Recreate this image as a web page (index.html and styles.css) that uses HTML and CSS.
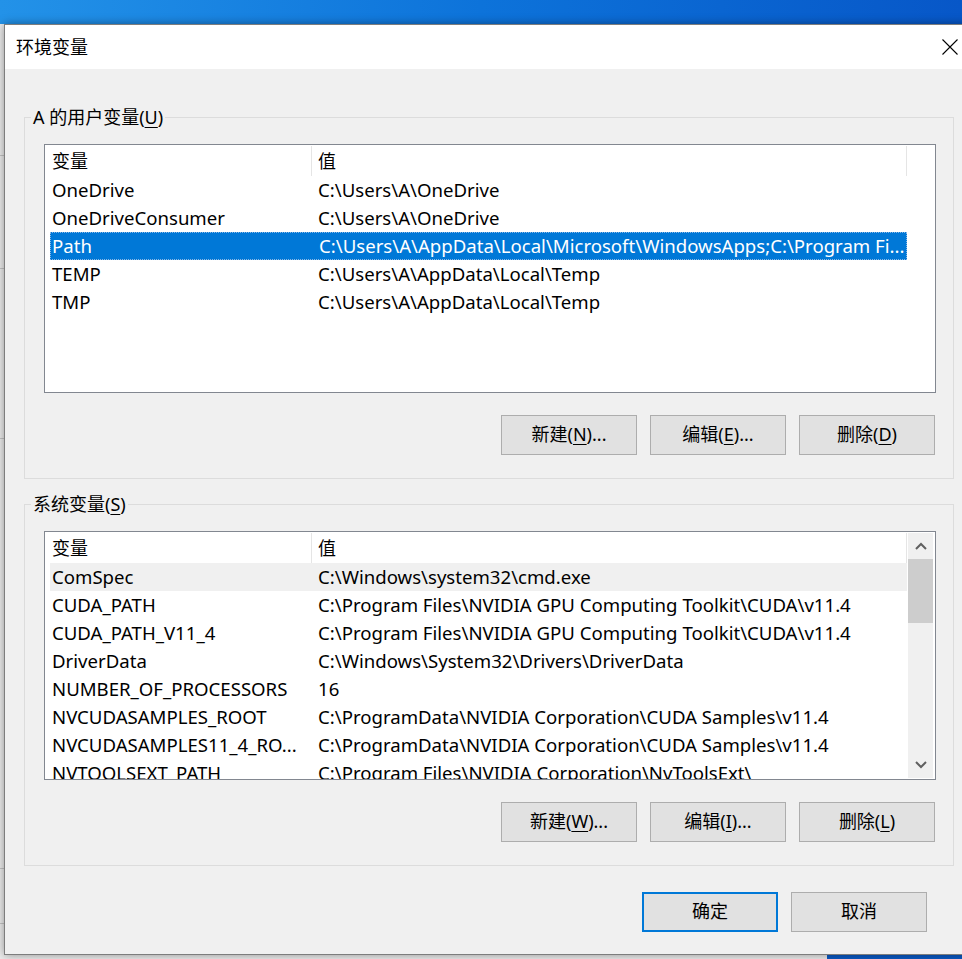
FILE: index.html
```html
<!DOCTYPE html>
<html lang="zh-CN">
<head>
<meta charset="utf-8">
<title>环境变量</title>
<link rel="stylesheet" href="styles.css">
</head>
<body>
<div class="dialog">
  <div class="titlebar">
    <span class="title">环境变量</span>
    <span class="close">
      <svg width="16" height="16" viewBox="0 0 16 16"><path d="M0.5 0.5L15.5 15.5M15.5 0.5L0.5 15.5" stroke="#000" stroke-width="1.1" fill="none"/></svg>
    </span>
  </div>
  <div class="content">
    <fieldset class="group">
      <legend>A 的用户变量(<u>U</u>)</legend>
      <div class="group-body">
        <div class="list">
          <div class="list-main">
            <div class="list-head"><span class="head-name">变量</span><span class="head-value">值</span></div>
            <div class="row"><span class="cell-name">OneDrive</span><span class="cell-value">C:\Users\A\OneDrive</span></div>
            <div class="row"><span class="cell-name">OneDriveConsumer</span><span class="cell-value">C:\Users\A\OneDrive</span></div>
            <div class="row selected"><span class="cell-name">Path</span><span class="cell-value">C:\Users\A\AppData\Local\Microsoft\WindowsApps;C:\Program Fi...</span></div>
            <div class="row"><span class="cell-name">TEMP</span><span class="cell-value">C:\Users\A\AppData\Local\Temp</span></div>
            <div class="row"><span class="cell-name">TMP</span><span class="cell-value">C:\Users\A\AppData\Local\Temp</span></div>
          </div>
        </div>
        <div class="buttons">
          <span class="btn">新建(<u>N</u>)...</span>
          <span class="btn">编辑(<u>E</u>)...</span>
          <span class="btn">删除(<u>D</u>)</span>
        </div>
      </div>
    </fieldset>

    <fieldset class="group">
      <legend>系统变量(<u>S</u>)</legend>
      <div class="group-body">
        <div class="list">
          <div class="list-main">
            <div class="list-head"><span class="head-name">变量</span><span class="head-value">值</span></div>
            <div class="row hot"><span class="cell-name">ComSpec</span><span class="cell-value">C:\Windows\system32\cmd.exe</span></div>
            <div class="row"><span class="cell-name">CUDA_PATH</span><span class="cell-value">C:\Program Files\NVIDIA GPU Computing Toolkit\CUDA\v11.4</span></div>
            <div class="row"><span class="cell-name">CUDA_PATH_V11_4</span><span class="cell-value">C:\Program Files\NVIDIA GPU Computing Toolkit\CUDA\v11.4</span></div>
            <div class="row"><span class="cell-name">DriverData</span><span class="cell-value">C:\Windows\System32\Drivers\DriverData</span></div>
            <div class="row"><span class="cell-name">NUMBER_OF_PROCESSORS</span><span class="cell-value">16</span></div>
            <div class="row"><span class="cell-name">NVCUDASAMPLES_ROOT</span><span class="cell-value">C:\ProgramData\NVIDIA Corporation\CUDA Samples\v11.4</span></div>
            <div class="row"><span class="cell-name">NVCUDASAMPLES11_4_RO...</span><span class="cell-value">C:\ProgramData\NVIDIA Corporation\CUDA Samples\v11.4</span></div>
            <div class="row"><span class="cell-name">NVTOOLSEXT_PATH</span><span class="cell-value">C:\Program Files\NVIDIA Corporation\NvToolsExt\</span></div>
          </div>
          <div class="scrollbar">
            <span class="sb-btn"><svg width="12" height="8" viewBox="0 0 12 8"><path d="M1 7L6 2L11 7" stroke="#606060" stroke-width="2" fill="none"/></svg></span>
            <span class="sb-thumb"></span>
            <span class="sb-track"></span>
            <span class="sb-btn"><svg width="12" height="8" viewBox="0 0 12 8"><path d="M1 1L6 6L11 1" stroke="#606060" stroke-width="2" fill="none"/></svg></span>
          </div>
        </div>
        <div class="buttons">
          <span class="btn">新建(<u>W</u>)...</span>
          <span class="btn">编辑(<u>I</u>)...</span>
          <span class="btn">删除(<u>L</u>)</span>
        </div>
      </div>
    </fieldset>

    <div class="footer">
      <span class="btn btn-default">确定</span>
      <span class="btn">取消</span>
    </div>
  </div>
</div>
</body>
</html>
```

FILE: styles.css
```css
*{margin:0;padding:0;box-sizing:border-box;}
html,body{height:100%;}
body{
  overflow:hidden;
  padding:24px 0 0 4px;
  font-family:"Noto Sans","Noto Sans CJK SC",sans-serif;
  font-size:18px;
  color:#000;
  background:
    linear-gradient(90deg,#2392e8 0%,#0d73da 50%,#0757c8 100%) 0 0/100% 24px no-repeat,
    linear-gradient(#0a59c4,#0a59c4) 827px 955px/200px 10px no-repeat,
    linear-gradient(#c4c4c4,#c4c4c4) 0 155px/4px 1px no-repeat,
    linear-gradient(#c4c4c4,#c4c4c4) 0 268px/4px 1px no-repeat,
    linear-gradient(#c4c4c4,#c4c4c4) 0 438px/4px 1px no-repeat,
    linear-gradient(#c4c4c4,#c4c4c4) 0 868px/4px 1px no-repeat,
    linear-gradient(#c4c4c4,#c4c4c4) 0 923px/4px 1px no-repeat,
    #ececec;
}
u{text-decoration-thickness:1px;text-underline-offset:3px;}

.dialog{width:970px;height:931px;border:1px solid #7d7d7d;background:#f0f0f0;box-shadow:0 0 9px rgba(0,0,0,.4);display:flex;flex-direction:column;}
.titlebar{height:44px;flex:none;background:#fff;display:flex;align-items:center;justify-content:space-between;}
.title{padding-left:11px;line-height:24px;}
.close{width:46px;height:44px;display:flex;align-items:center;justify-content:center;}

.content{padding:36px 19px 22px;}
.group{border:1px solid #dcdcdc;min-width:0;}
.group + .group{margin-top:13px;}
.group legend{margin-left:6px;padding:0 2px;line-height:24px;}
.group-body{padding:15px 17px 23px 19px;}

.list{height:249px;border:1px solid #828790;background:#fff;display:flex;overflow:hidden;}
.list-main{flex:1;min-width:0;overflow:hidden;}
.list-head{display:flex;height:31px;}
.list-head span{height:30px;margin-top:1px;padding-top:1px;line-height:29px;border-right:1px solid #e5e5e5;}
.head-name{width:267px;padding-left:7px;}
.head-value{width:595px;padding-left:6px;}

.row{display:flex;width:857px;height:28px;margin-left:5px;font-size:18.6px;line-height:28px;white-space:nowrap;}
.row span{overflow:hidden;}
.cell-name{width:261px;flex:none;padding:0 4px 0 2px;}
.cell-value{width:596px;flex:none;padding:0 4px 0 7px;}
.row.selected{background:#0078d7;color:#fff;border:1px dotted #8ab8e6;line-height:26px;}
.row.selected .cell-name{padding-left:1px;}
.row.hot{background:#f0f0f0;}

.scrollbar{width:25px;flex:none;margin:1px 2px 1px 1px;background:#f0f0f0;display:flex;flex-direction:column;}
.sb-btn{height:26px;flex:none;display:flex;align-items:center;justify-content:center;}
.sb-thumb{height:64px;flex:none;background:#cdcdcd;}
.sb-track{flex:1;}

.buttons{display:flex;justify-content:flex-end;gap:13px;margin-top:22px;padding-right:1px;}
.btn{width:136px;height:40px;background:#e1e1e1;border:1px solid #adadad;line-height:37px;text-align:center;}
.btn-default{border:2px solid #0078d7;line-height:35px;}
.footer{display:flex;justify-content:flex-end;gap:13px;margin-top:26px;padding-right:27px;}
```
